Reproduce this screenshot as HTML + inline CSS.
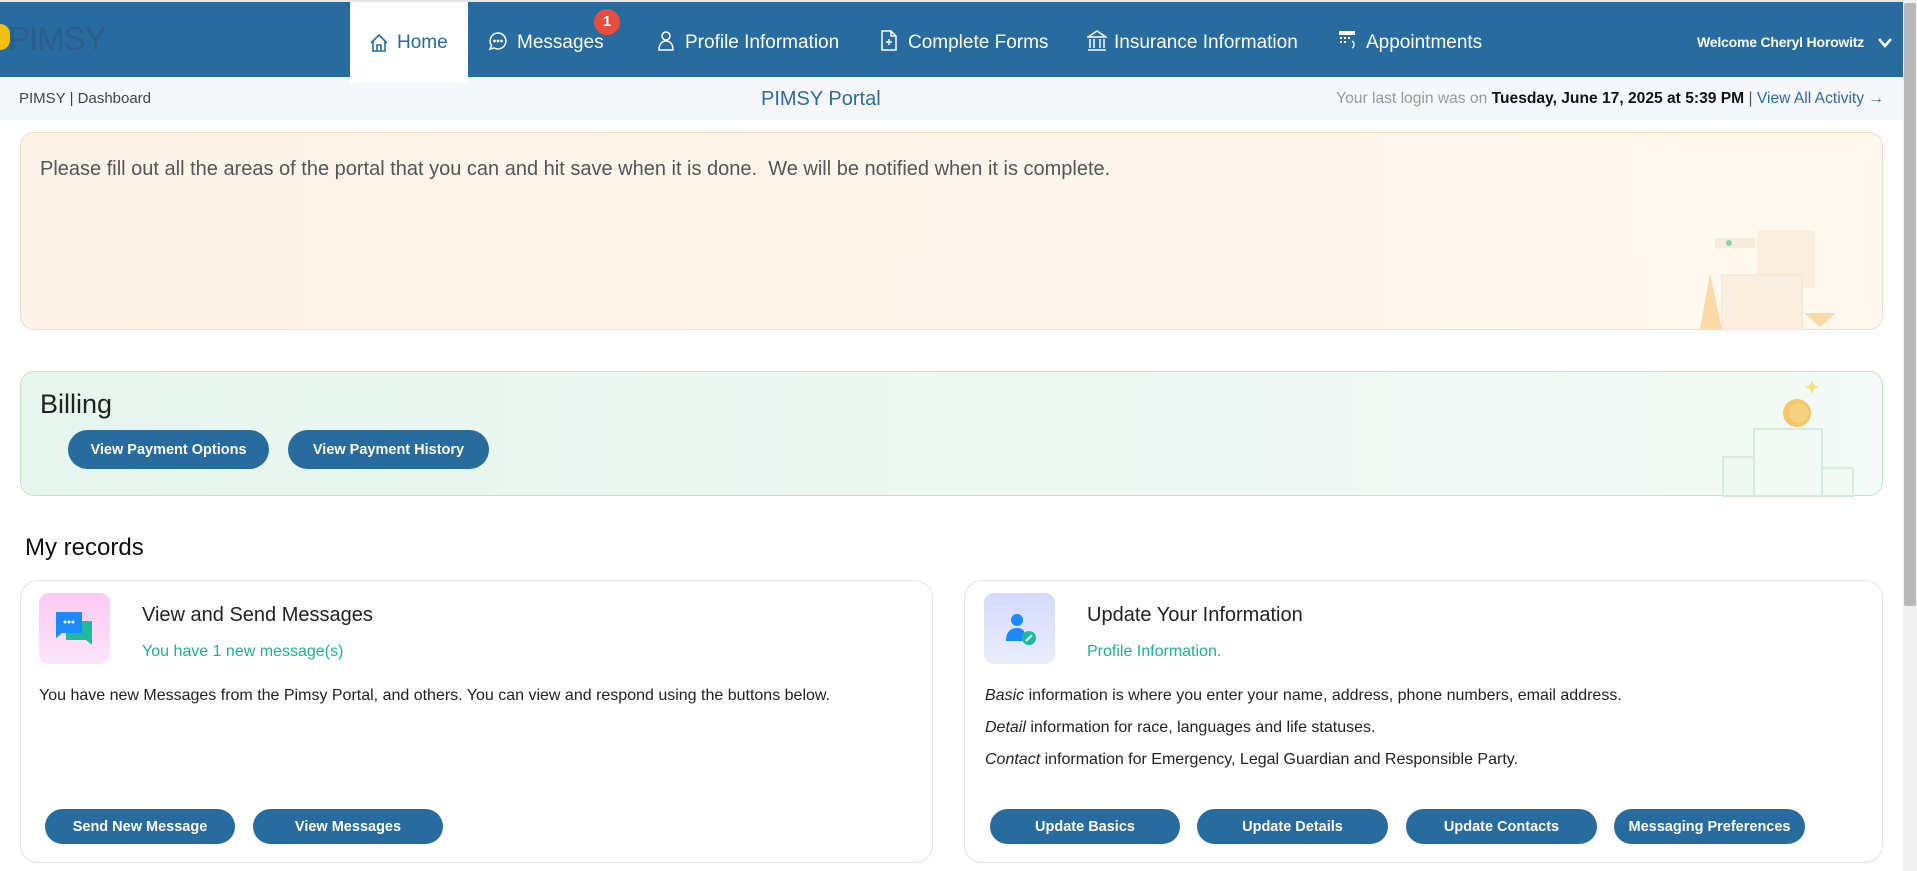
<!DOCTYPE html>
<html><head><meta charset="utf-8"><style>
*{box-sizing:border-box;margin:0;padding:0}
body{width:1917px;height:871px;overflow:hidden;background:#fff;font-family:"Liberation Sans",Arial,sans-serif;position:relative;color:#222}
.a{position:absolute;white-space:nowrap}
.nav{left:0;top:2px;width:1903px;height:75px;background:#276b9f}
.top{left:0;top:0;width:1917px;height:3px;background:#e6e6e6}
.ni{color:#fff;font-size:19px;top:32px}
.btn{position:absolute;background:#276b9f;color:#fff;border-radius:20px;font-size:14.5px;font-weight:bold;display:flex;align-items:center;justify-content:center}
.card{position:absolute;border:1px solid #e3e3e3;border-radius:18px;background:#fff}
.ttl{font-size:20px;color:#222}
.grn{font-size:16px;color:#1bb394}
.bd{font-size:16px;color:#222}
</style></head><body>
<div class="a top"></div>
<div class="a nav"></div>
<div class="a" style="left:0;top:24px;width:10px;height:26px;background:#f2c10f;border-radius:0 13px 13px 0"></div>
<div class="a" style="left:8px;top:20px;font-size:33px;color:#2c5e8a;letter-spacing:-1px">PIMSY</div>
<div class="a" style="left:350px;top:2px;width:118px;height:81px;background:#fff"></div>
<svg class="a" style="left:369px;top:33px" width="20" height="20" viewBox="0 0 20 20" fill="none" stroke="#276b9f" stroke-width="1.6"><path d="M2 10 L10 2 L18 10 M4 8 V18 H16 V8 M8 18 V12 H12 V18"/></svg>
<div class="a" style="left:397px;top:32px;font-size:19px;color:#276b9f">Home</div>
<svg class="a" style="left:488px;top:31px" width="20" height="20" viewBox="0 0 20 20" fill="none" stroke="#fff" stroke-width="1.5"><path d="M10 2a8 8 0 1 1-4 15L2 18l1.5-3.5A8 8 0 0 1 10 2z"/><circle cx="6.5" cy="10" r=".6" fill="#fff"/><circle cx="10" cy="10" r=".6" fill="#fff"/><circle cx="13.5" cy="10" r=".6" fill="#fff"/></svg>
<div class="a ni" style="left:517px">Messages</div>
<div class="a" style="left:594px;top:9px;width:26px;height:26px;border-radius:50%;background:#e74c3c;color:#fff;font-size:15px;font-weight:bold;text-align:center;line-height:26px">1</div>
<svg class="a" style="left:657px;top:30px" width="18" height="22" viewBox="0 0 18 22" fill="none" stroke="#fff" stroke-width="1.5"><circle cx="9" cy="6" r="4"/><path d="M2 20 C2 14 5 11 9 11 C13 11 16 14 16 20 Z"/></svg>
<div class="a ni" style="left:685px">Profile Information</div>
<svg class="a" style="left:881px;top:30px" width="16" height="21" viewBox="0 0 16 21" fill="none" stroke="#fff" stroke-width="1.5"><path d="M1 1 H10 L15 6 V20 H1 Z M10 1 V6 H15 M8 9 V15 M5 12 H11"/></svg>
<div class="a ni" style="left:908px">Complete Forms</div>
<svg class="a" style="left:1087px;top:30px" width="20" height="21" viewBox="0 0 20 21" fill="none" stroke="#fff" stroke-width="1.5"><path d="M1 7 L10 1 L19 7 Z M3 9 V18 M7 9 V18 M13 9 V18 M17 9 V18 M1 20 H19"/></svg>
<div class="a ni" style="left:1114px">Insurance Information</div>
<svg class="a" style="left:1338px;top:29px" width="20" height="20" viewBox="0 0 20 20" fill="#fff"><rect x="1" y="2" width="16" height="4"/><rect x="2" y="8" width="2" height="2"/><rect x="6" y="8" width="2" height="2"/><rect x="10" y="8" width="2" height="2"/><rect x="2" y="12" width="2" height="2"/><rect x="6" y="12" width="2" height="2"/><path d="M14 12 a4 4 0 0 1 0 7" fill="none" stroke="#fff" stroke-width="1.3"/></svg>
<div class="a ni" style="left:1366px">Appointments</div>
<div class="a" style="left:1697px;top:34px;color:#fff;font-size:14px;font-weight:bold;letter-spacing:-0.2px">Welcome Cheryl Horowitz</div>
<svg class="a" style="left:1877px;top:37px" width="16" height="12" viewBox="0 0 16 12" fill="none" stroke="#fff" stroke-width="2.5"><path d="M2 2 L8 9 L14 2"/></svg>
<div class="a" style="left:0;top:77px;width:1903px;height:43px;background:#f6f7fb"></div>
<div class="a" style="left:350px;top:77px;width:118px;height:6px;background:#fff"></div>
<div class="a" style="left:19px;top:90px;font-size:15px;color:#444">PIMSY | Dashboard</div>
<div class="a" style="left:761px;top:88px;font-size:20px;color:#2a6ca3">PIMSY Portal</div>
<div class="a" style="right:33px;top:90px;font-size:15.6px;color:#999">Your last login was on <b style="color:#111">Tuesday, June 17, 2025 at 5:39 PM</b> <span style="color:#555">|</span> <span style="color:#2a6ca3">View All Activity →</span></div>
<div class="a" style="left:1903px;top:0;width:14px;height:871px;background:#f1f1f1"></div>
<div class="a" style="left:1904px;top:3px;width:12px;height:603px;background:#b9b9b9;border-radius:2px"></div>

<div class="a" style="left:20px;top:132px;width:1863px;height:198px;border:1px solid #f3dcc0;border-radius:14px;background:linear-gradient(90deg,#fdf3e8,#fff8ef)"></div>
<div class="a" style="left:40px;top:158px;font-size:20px;color:#555">Please fill out all the areas of the portal that you can and hit save when it is done.&nbsp; We will be notified when it is complete.</div>
<svg class="a" style="left:1700px;top:225px" width="150" height="105" viewBox="0 0 150 105"><rect x="57" y="5" width="58" height="58" rx="3" fill="#fbeede"/><rect x="15" y="13" width="40" height="10" fill="#f6ebdc"/><circle cx="29" cy="18" r="3" fill="#8fd3a0"/><path d="M10 48 L0 105 H22 Z" fill="#fcd9a7"/><rect x="22" y="50" width="80" height="55" fill="#fbefe1" stroke="#f3e1cd"/><path d="M104 88 L120 102 L136 88 Z" fill="#fcd9a7"/></svg>

<div class="a" style="left:20px;top:371px;width:1863px;height:125px;border:1px solid #bfe6c2;border-radius:14px;background:linear-gradient(90deg,#e6f5ee,#f3faf7)"></div>
<div class="a" style="left:40px;top:389px;font-size:27px;color:#222">Billing</div>
<div class="btn" style="left:68px;top:430px;width:201px;height:39px">View Payment Options</div>
<div class="btn" style="left:288px;top:430px;width:201px;height:39px">View Payment History</div>
<svg class="a" style="left:1720px;top:375px" width="140" height="122" viewBox="0 0 140 122"><rect x="3" y="82" width="54" height="39" fill="#eef8f1" stroke="#d4ecdb" stroke-width="2"/><rect x="34" y="54" width="68" height="67" fill="#f1faf4" stroke="#d4ecdb" stroke-width="2"/><rect x="102" y="93" width="31" height="28" fill="#f1faf4" stroke="#d4ecdb" stroke-width="2"/><circle cx="77" cy="38" r="14" fill="#f5c46b"/><circle cx="79" cy="38" r="10" fill="#f7d27c"/><path d="M92 5 l2 5 5 2-5 2-2 5-2-5-5-2 5-2z" fill="#f7e27a"/></svg>

<div class="a" style="left:25px;top:534px;font-size:24px;color:#111">My records</div>

<div class="card" style="left:20px;top:580px;width:913px;height:283px"></div>
<div class="a" style="left:39px;top:593px;width:71px;height:71px;border-radius:10px;background:linear-gradient(#fcc9f3,#fde4fa)"></div>
<svg class="a" style="left:52px;top:609px" width="44" height="40" viewBox="0 0 44 40"><path d="M14 12 H40 V36 L34 31 H14 Z" fill="#1abc9c"/><path d="M4 3 H30 V24 H10 L4 29 Z" fill="#1e88ff"/><circle cx="13" cy="13" r="1.5" fill="#fff"/><circle cx="17" cy="13" r="1.5" fill="#fff"/><circle cx="21" cy="13" r="1.5" fill="#fff"/></svg>
<div class="a ttl" style="left:142px;top:604px">View and Send Messages</div>
<div class="a grn" style="left:142px;top:643px">You have 1 new message(s)</div>
<div class="a bd" style="left:39px;top:687px">You have new Messages from the Pimsy Portal, and others. You can view and respond using the buttons below.</div>
<div class="btn" style="left:45px;top:809px;width:190px;height:35px">Send New Message</div>
<div class="btn" style="left:253px;top:809px;width:190px;height:35px">View Messages</div>

<div class="card" style="left:964px;top:580px;width:919px;height:283px"></div>
<div class="a" style="left:984px;top:593px;width:71px;height:71px;border-radius:10px;background:linear-gradient(#d4dafd,#eaedfd)"></div>
<svg class="a" style="left:1004px;top:611px" width="36" height="36" viewBox="0 0 36 36"><circle cx="13" cy="9" r="6" fill="#1e88ff"/><path d="M2 30 C2 20 7 17 13 17 C19 17 22 20 22 30 Z" fill="#1e88ff"/><circle cx="25" cy="27" r="7" fill="#1abc9c"/><path d="M22 30 L28 24" stroke="#fff" stroke-width="2"/></svg>
<div class="a ttl" style="left:1087px;top:604px">Update Your Information</div>
<div class="a grn" style="left:1087px;top:643px">Profile Information.</div>
<div class="a bd" style="left:985px;top:687px"><i>Basic</i> information is where you enter your name, address, phone numbers, email address.</div>
<div class="a bd" style="left:985px;top:719px"><i>Detail</i> information for race, languages and life statuses.</div>
<div class="a bd" style="left:985px;top:751px"><i>Contact</i> information for Emergency, Legal Guardian and Responsible Party.</div>
<div class="btn" style="left:990px;top:809px;width:190px;height:35px">Update Basics</div>
<div class="btn" style="left:1197px;top:809px;width:191px;height:35px">Update Details</div>
<div class="btn" style="left:1406px;top:809px;width:191px;height:35px">Update Contacts</div>
<div class="btn" style="left:1614px;top:809px;width:191px;height:35px">Messaging Preferences</div>
</body></html>
